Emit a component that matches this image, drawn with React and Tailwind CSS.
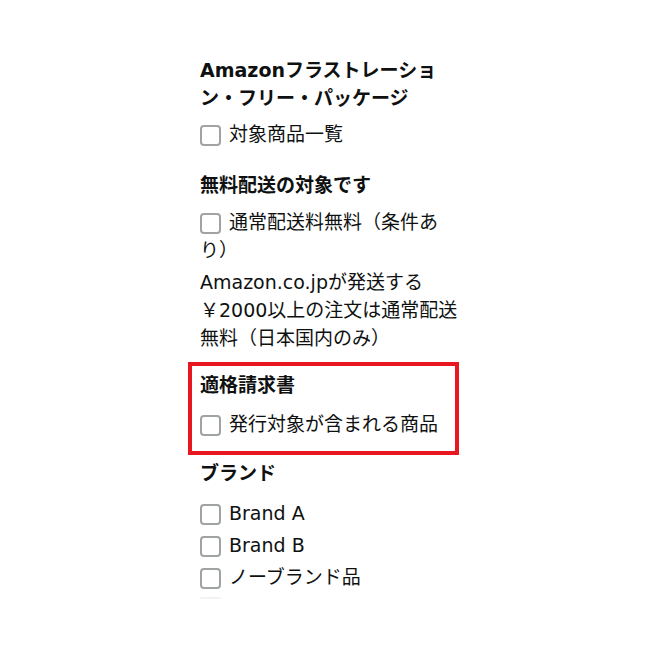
import React from 'react';

const Box = () => (
  <span className="inline-block w-[21px] h-[21px] mr-[8px] align-[-5px] rounded-[4px] border-2 border-[#a0a3a3] bg-white"></span>
);

const Option = ({ label, className = '' }) => (
  <label className={`block leading-[28px] ${className}`}>
    <Box />
    {label}
  </label>
);

export default function App() {
  return (
    <div
      className="w-[650px] h-[650px] bg-white text-[#0f1111] text-[19px] overflow-hidden"
      style={{ fontFamily: '"DejaVu Sans", "Noto Sans CJK JP", sans-serif' }}
    >
      <div className="ml-[200px] w-[260px] pt-[56px]">

        {/* Frustration free */}
        <h3 className="font-bold leading-[28px]">Amazonフラストレーション・フリー・パッケージ</h3>
        <Option label="対象商品一覧" className="mt-[8px]" />

        {/* Free shipping */}
        <h3 className="font-bold leading-[28px] mt-[23px]">無料配送の対象です</h3>
        <Option label="通常配送料無料（条件あり）" className="mt-[9px]" />
        <p className="leading-[28px] mt-[4px]">Amazon.co.jpが発送する￥2000以上の注文は通常配送無料（日本国内のみ）</p>

        {/* Invoice */}
        <div className="ml-[-12px] w-[271px] mt-[10px] border-4 border-[#e8161e] pl-[8px] pt-[5px] pb-[13px]">
          <h3 className="font-bold leading-[28px]">適格請求書</h3>
          <Option label="発行対象が含まれる商品" className="mt-[11px]" />
        </div>

        {/* Brand */}
        <h3 className="font-bold leading-[28px] mt-[4px]">ブランド</h3>
        <Option label="Brand A" className="mt-[12px]" />
        <Option label="Brand B" className="mt-[4px]" />
        <Option label="ノーブランド品" className="mt-[4px]" />
        <div className="mt-[6px] w-[21px] h-[2px] rounded-t-[3px] bg-[#f2f2f2]"></div>
      </div>
    </div>
  );
}
